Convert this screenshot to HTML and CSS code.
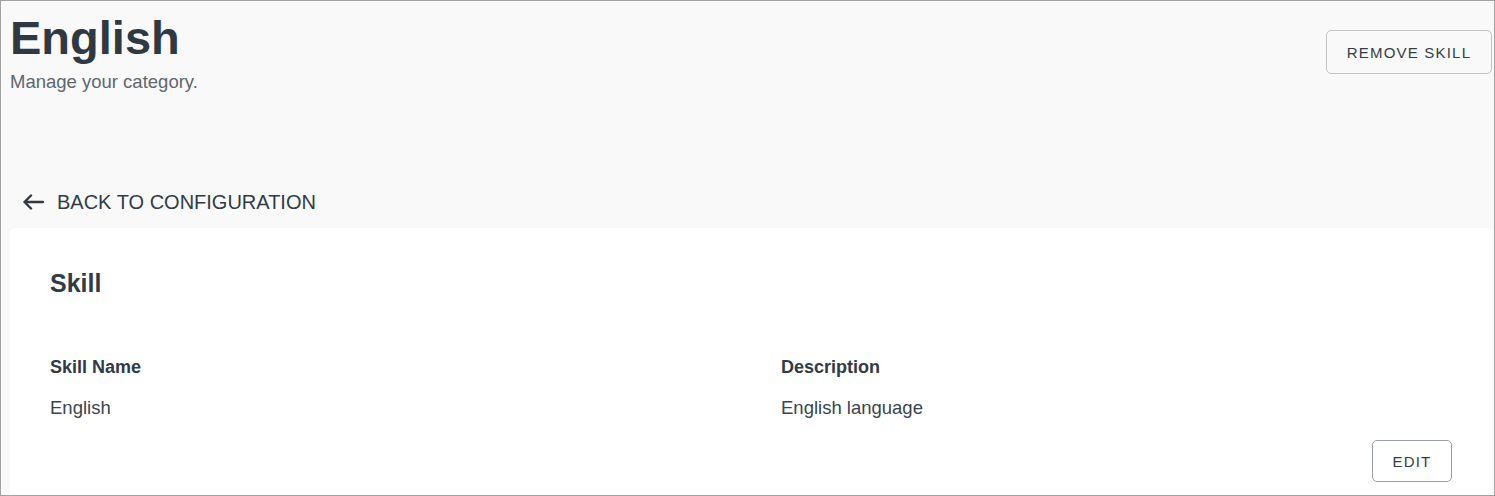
FILE: index.html
```html
<!DOCTYPE html>
<html lang="en">
<head>
  <meta charset="UTF-8" />
  <meta name="viewport" content="width=device-width, initial-scale=1.0"/>
  <title>English - Skill</title>
  <link rel="stylesheet" href="styles.css">
</head>
<body>

  <div class="page">
    <div class="header">
      <div class="heading">
        <h1>English</h1>
        <p class="subtitle">Manage your category.</p>
      </div>
      <button class="btn remove">Remove skill</button>
    </div>

    <a class="back" href="#">
      <svg width="22" height="16" viewBox="0 0 22 16" aria-hidden="true">
        <path d="M21 8H2.5M9 1.5L2.5 8L9 14.5" fill="none" stroke="#303b46" stroke-width="2.4" stroke-linecap="round" stroke-linejoin="round"/>
      </svg>
      Back to configuration
    </a>

    <div class="card">
      <h2>Skill</h2>
      <div class="fields">
        <div class="field">
          <div class="label">Skill Name</div>
          <div class="value">English</div>
        </div>
        <div class="field">
          <div class="label">Description</div>
          <div class="value">English language</div>
        </div>
      </div>
      <div class="actions">
        <button class="btn edit">Edit</button>
      </div>
    </div>
  </div>

</body>
</html>
```

FILE: styles.css
```css
html, body {
  margin: 0;
  height: 100%;
}

body {
  font-family: 'Liberation Sans', Arial, sans-serif;
  color: #303b46;
  background: #fff;
}

.page {
  box-sizing: border-box;
  height: 496px;
  overflow: hidden;
  border: 1px solid #a3a3a3;
  background: #f9f9f9;
  padding: 9px 2px 0 9px;
}

.header {
  display: flex;
  justify-content: space-between;
  align-items: flex-start;
}

h1 {
  margin: 0;
  font-size: 47px;
  line-height: 56px;
  font-weight: bold;
  color: #2e3944;
}

.subtitle {
  margin: 5px 0 0;
  font-size: 18.5px;
  line-height: 22px;
  color: #5d6670;
}

.btn {
  font-family: inherit;
  text-transform: uppercase;
  font-size: 15px;
  letter-spacing: 1.2px;
  color: #333d47;
  background: transparent;
  border: 1px solid #c2c4c6;
  border-radius: 5px;
  cursor: pointer;
}

.remove {
  margin-top: 20px;
  width: 166px;
  height: 44px;
}

.back {
  display: flex;
  align-items: center;
  gap: 13px;
  margin: 97px 0 0 12px;
  font-size: 20px;
  line-height: 24px;
  color: #303b46;
  text-decoration: none;
  text-transform: uppercase;
  width: max-content;
}

.card {
  margin-top: 14px;
  background: #fff;
  border-radius: 5px;
  padding: 40px 40px 20px;
}

.card h2 {
  margin: 0;
  font-size: 25px;
  line-height: 30px;
  font-weight: bold;
}

.fields {
  display: grid;
  grid-template-columns: 1fr 1fr;
  gap: 60px;
  margin-top: 58px;
}

.label {
  font-size: 18px;
  line-height: 22px;
  font-weight: bold;
}

.value {
  margin-top: 19px;
  font-size: 18.5px;
  line-height: 22px;
  color: #3a4450;
}

.actions {
  display: flex;
  justify-content: flex-end;
  margin-top: 21px;
}

.edit {
  width: 80px;
  height: 42px;
  background: #fff;
  border-color: #9aa0a6;
}
```
